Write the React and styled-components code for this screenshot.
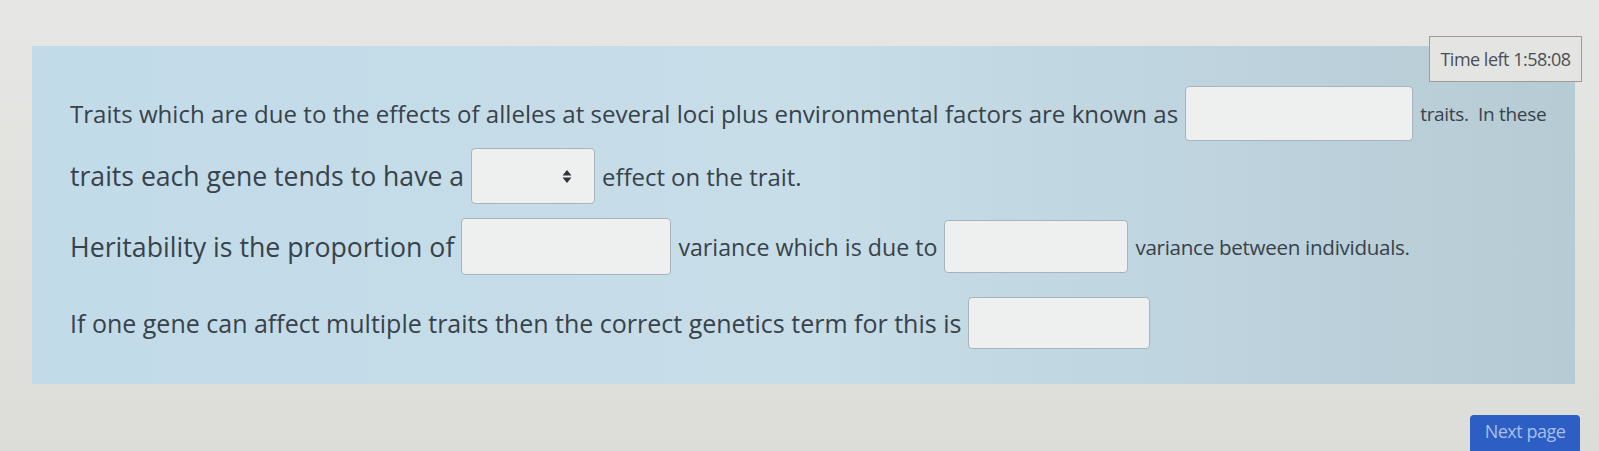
import React from "react";
import styled, { createGlobalStyle } from "styled-components";

const GlobalStyle = createGlobalStyle`
  html, body {
    margin: 0;
    padding: 0;
    background: #e2e2df;
    font-family: "Open Sans", "Noto Sans", Arial, sans-serif;
    color: #38424a;
  }
`;

const Page = styled.div`
  position: relative;
  width: 100%;
  height: 100vh;
  overflow: hidden;
  padding: 46px 19px 0 32px;
  box-sizing: border-box;
  background: linear-gradient(180deg, #e6e6e4 0%, #dcdcd8 100%);
`;

const Timer = styled.div`
  position: absolute;
  top: 36px;
  right: 17px;
  width: 153px;
  height: 46px;
  box-sizing: border-box;
  border: 1px solid #a39a98;
  background: #e4e4e2;
  font-size: 18px;
  letter-spacing: -0.5px;
  color: #4a4f55;
  display: flex;
  align-items: center;
  justify-content: center;
`;

const QuestionBox = styled.div`
  margin-right: 5px;
  background: linear-gradient(90deg, #c2dbe9 0%, #c7dde8 50%, #b6cbd4 100%);
  padding: 40px 24px 35px 38px;
  display: flex;
  flex-direction: column;
`;

const Row = styled.div`
  display: flex;
  align-items: center;
  gap: 7px;
  min-height: 52px;
  margin-top: ${(p) => p.$gap || 0}px;
  white-space: nowrap;
`;

const Words = styled.span`
  font-size: ${(p) => p.$size || 24}px;
  letter-spacing: ${(p) => (p.$size < 21 ? -0.3 : 0)}px;
`;

const Blank = styled.div`
  width: ${(p) => p.$w}px;
  height: ${(p) => p.$h || 52}px;
  box-sizing: border-box;
  background: #eef0f0;
  border: 1px solid #a8b3ba;
  border-radius: 4px;
  flex-shrink: 0;
`;

const Select = styled(Blank)`
  display: flex;
  align-items: center;
  justify-content: flex-end;
  padding-right: 22px;
`;

const Footer = styled.div`
  display: flex;
  justify-content: flex-end;
  padding-top: 31px;
`;

const NextButton = styled.button`
  width: 110px;
  height: 50px;
  border: none;
  border-radius: 4px;
  background: #2c5ec3;
  color: #a9bfea;
  font-family: inherit;
  font-size: 18px;
  line-height: 22px;
  letter-spacing: -0.5px;
  padding: 0 0 18px;
`;

function Arrows() {
  return (
    <svg width="10" height="15" viewBox="0 0 10 15">
      <path d="M5 1 L9.5 6.5 H0.5 Z" fill="#2f3438" />
      <path d="M5 14 L9.5 8.5 H0.5 Z" fill="#2f3438" />
    </svg>
  );
}

export default function App() {
  return (
    <>
      <GlobalStyle />
      <Page>
        <QuestionBox>
          <Row>
            <Words $size={24.1}>
              Traits which are due to the effects of alleles at several loci plus environmental factors are known as
            </Words>
            <Blank $w={228} $h={55} />
            <Words $size={19}>traits.&nbsp; In these</Words>
          </Row>
          <Row $gap={7}>
            <Words $size={26.6}>traits each gene tends to have a</Words>
            <Select $w={124} $h={56}>
              <Arrows />
            </Select>
            <Words $size={23.9}>effect on the trait.</Words>
          </Row>
          <Row $gap={14}>
            <Words $size={26.7}>Heritability is the proportion of</Words>
            <Blank $w={210} $h={57} />
            <Words $size={23.2}>variance which is due to</Words>
            <Blank $w={184} $h={53} />
            <Words $size={20.6}>variance between individuals.</Words>
          </Row>
          <Row $gap={22}>
            <Words $size={25}>
              If one gene can affect multiple traits then the correct genetics term for this is
            </Words>
            <Blank $w={182} />
          </Row>
        </QuestionBox>
        <Timer>Time left 1:58:08</Timer>
        <Footer>
          <NextButton>Next page</NextButton>
        </Footer>
      </Page>
    </>
  );
}
